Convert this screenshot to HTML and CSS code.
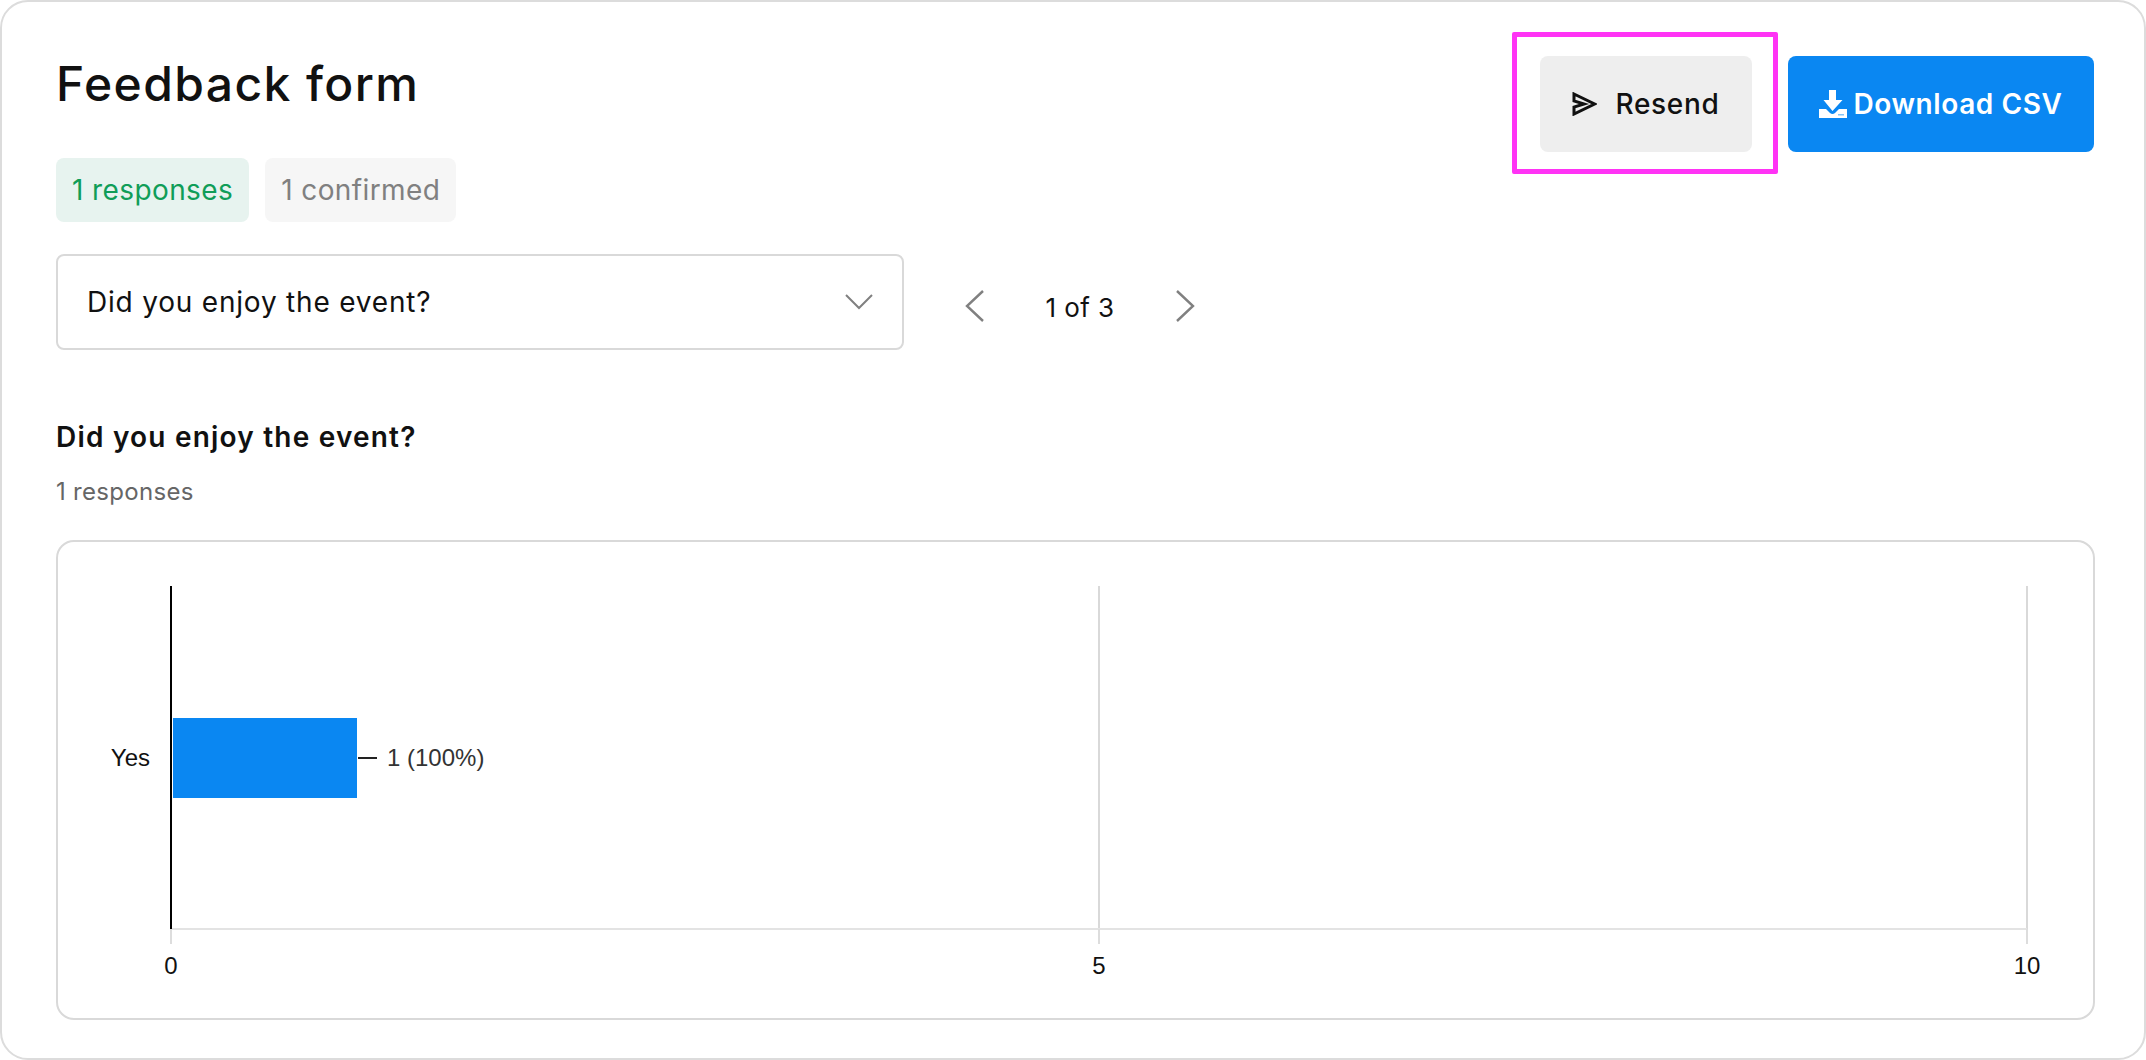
FILE: index.html
```html
<!DOCTYPE html>
<html lang="en">

<head>
  <meta charset="UTF-8">
  <title>Feedback form</title>
  <link rel="stylesheet" href="styles.css">
</head>

<body>

  <div class="card">
    <!-- Title, counters and actions -->
    <div class="topRow">
      <div class="titleBlock">
        <h1>Feedback form</h1>
        <div class="chips">
          <span class="chip chipGreen">1 responses</span>
          <span class="chip chipGrey">1 confirmed</span>
        </div>
      </div>
      <div class="actions">
        <button type="button" class="btn btnGrey">
          <svg class="sendIcon" viewBox="0 0 25 24" xmlns="http://www.w3.org/2000/svg">
            <path d="M2 2 L22.500 12 L2 22 V15 L12 12 L2 9 Z" fill="none" stroke="#111" stroke-width="3" />
          </svg>
          Resend
        </button>
        <button type="button" class="btn btnBlue">
          <svg class="downloadIcon" viewBox="0 0 28 28" xmlns="http://www.w3.org/2000/svg">
            <path d="M10 0 H17 V10 H23.500 L13.500 21 L4.500 10 H10 Z" fill="#fff" />
            <path d="M0 19 H7 L11 23 Q13.500 25 16 23 L20 19 H28 V28 H0 Z" fill="#fff" />
            <rect x="19" y="24" width="6" height="1.500" fill="#0a87f2" opacity="0.5" />
          </svg>
          Download CSV
        </button>
        <span class="highlight"></span>
      </div>
    </div>

    <!-- Question picker -->
    <div class="pickerRow">
      <div class="select">
        <span>Did you enjoy the event?</span>
        <svg class="selectArrow" viewBox="0 0 28 16" xmlns="http://www.w3.org/2000/svg">
          <path d="M1 1 L14 14 L27 1" fill="none" stroke="#808080" stroke-width="2" />
        </svg>
      </div>
      <div class="pager">
        <svg class="pagerArrow" viewBox="0 0 20 32" xmlns="http://www.w3.org/2000/svg">
          <path d="M18 1 L2 16 L18 31" fill="none" stroke="#808080" stroke-width="2.400" />
        </svg>
        <span class="pagerText">1 of 3</span>
        <svg class="pagerArrow" viewBox="0 0 20 32" xmlns="http://www.w3.org/2000/svg">
          <path d="M2 1 L18 16 L2 31" fill="none" stroke="#808080" stroke-width="2.400" />
        </svg>
      </div>
    </div>

    <!-- Question result -->
    <h2>Did you enjoy the event?</h2>
    <p class="responseCount">1 responses</p>

    <div class="chartBox">
      <svg class="chart" viewBox="0 0 2039 480" xmlns="http://www.w3.org/2000/svg">
        <line x1="1043" y1="46" x2="1043" y2="389" stroke="#d9d9d9" stroke-width="2" />
        <line x1="1971" y1="46" x2="1971" y2="389" stroke="#d9d9d9" stroke-width="2" />
        <line x1="115" y1="389" x2="1971" y2="389" stroke="#e3e3e3" stroke-width="2" />
        <line x1="115" y1="389" x2="115" y2="404" stroke="#ddd" stroke-width="2" />
        <line x1="1043" y1="389" x2="1043" y2="404" stroke="#ddd" stroke-width="2" />
        <line x1="1971" y1="389" x2="1971" y2="404" stroke="#ddd" stroke-width="2" />
        <rect x="117" y="178" width="184" height="80" fill="#0a87f2" />
        <line x1="115" y1="46" x2="115" y2="389" stroke="#000" stroke-width="2" />
        <line x1="302" y1="218" x2="321" y2="218" stroke="#222" stroke-width="2" />
        <text x="94" y="226" text-anchor="end" class="chartLabel">Yes</text>
        <text x="331" y="226" class="chartValue">1 (100%)</text>
        <text x="115" y="434" text-anchor="middle" class="chartLabel">0</text>
        <text x="1043" y="434" text-anchor="middle" class="chartLabel">5</text>
        <text x="1971" y="434" text-anchor="middle" class="chartLabel">10</text>
      </svg>
    </div>
  </div>

</body>

</html>
```

FILE: styles.css
```css
body {
  margin: 0;
  padding: 0;
  background-color: white;
  color: #111;
  font-family: "Inter", "Noto Sans", sans-serif;
}

.card {
  box-sizing: border-box;
  width: 2146px;
  height: 1060px;
  padding: 0 50px 0 54px;
  border: 2px solid #dcdcdc;
  border-radius: 28px;
}

.topRow {
  display: flex;
  justify-content: space-between;
  height: 252px;
}

h1 {
  margin: 50px 0 0;
  font-size: 48px;
  line-height: 64px;
  font-weight: 500;
  letter-spacing: 1.400px;
}

.chips {
  display: flex;
  gap: 16px;
  margin-top: 42px;
}

.chip {
  padding: 0 16px;
  height: 64px;
  line-height: 64px;
  font-size: 28px;
  letter-spacing: 0.400px;
  border-radius: 8px;
}

.chipGreen {
  background-color: #e7f3ef;
  color: #109d58;
}

.chipGrey {
  background-color: #f6f6f6;
  color: #808080;
}

.actions {
  position: relative;
  display: flex;
  gap: 36px;
  padding-top: 54px;
}

.btn {
  display: flex;
  align-items: center;
  justify-content: center;
  height: 96px;
  border: none;
  border-radius: 8px;
  font-family: inherit;
  font-size: 28px;
  font-weight: 500;
  letter-spacing: 0.700px;
}

.btnGrey {
  width: 212px;
  gap: 18px;
  background-color: #eee;
  color: #111;
}

.btnBlue {
  width: 306px;
  gap: 6px;
  background-color: #0a87f2;
  color: white;
  font-weight: 600;
  letter-spacing: 0.600px;
}

.sendIcon {
  width: 25px;
  height: 24px;
}

.downloadIcon {
  width: 28px;
  height: 28px;
}

/* pink box drawn over the resend button */
.highlight {
  position: absolute;
  left: -28px;
  top: 30px;
  width: 256px;
  height: 132px;
  border: 5px solid #ff33f5;
  border-radius: 2px;
}

.pickerRow {
  display: flex;
  align-items: center;
  height: 96px;
}

.select {
  box-sizing: border-box;
  display: flex;
  align-items: center;
  justify-content: space-between;
  width: 848px;
  height: 96px;
  padding: 0 29px;
  border: 2px solid #d9d9d9;
  border-radius: 8px;
  font-size: 28px;
  letter-spacing: 0.800px;
}

.selectArrow {
  width: 28px;
  height: 16px;
}

.pager {
  display: flex;
  align-items: center;
  margin: 8px 0 0 61px;
  font-size: 26px;
  letter-spacing: 0.400px;
}

.pagerArrow {
  width: 20px;
  height: 32px;
}

.pagerText {
  width: 190px;
  padding-top: 3px;
  text-align: center;
}

h2 {
  margin: 67px 0 0;
  font-size: 28px;
  line-height: 40px;
  font-weight: 600;
  letter-spacing: 1.200px;
}

.responseCount {
  margin: 17px 0 0;
  font-size: 24px;
  line-height: 36px;
  letter-spacing: 0.300px;
  color: #666;
}

.chartBox {
  box-sizing: border-box;
  width: 2039px;
  height: 480px;
  margin-top: 30px;
  border: 2px solid #d9d9d9;
  border-radius: 18px;
}

.chart {
  display: block;
  width: 2039px;
  height: 480px;
  margin: -2px;
}

.chartLabel,
.chartValue {
  font-family: "Liberation Sans", Arial, sans-serif;
  font-size: 24px;
  fill: #111;
}

.chartValue {
  fill: #333;
}
```
